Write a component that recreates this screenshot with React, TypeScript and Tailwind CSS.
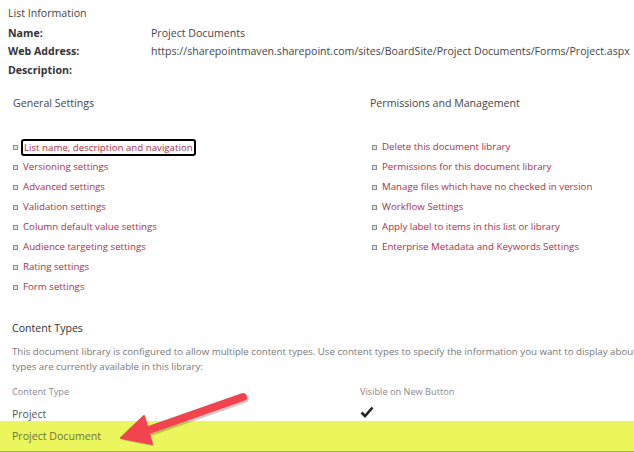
import React from "react";

const left = [
  "List name, description and navigation",
  "Versioning settings",
  "Advanced settings",
  "Validation settings",
  "Column default value settings",
  "Audience targeting settings",
  "Rating settings",
  "Form settings",
];
const right = [
  "Delete this document library",
  "Permissions for this document library",
  "Manage files which have no checked in version",
  "Workflow Settings",
  "Apply label to items in this list or library",
  "Enterprise Metadata and Keywords Settings",
];

function Bullet() {
  return <span className="inline-block w-[5px] h-[5px] border border-[#8c8c8c] bg-[#e4e4e4] shrink-0" />;
}

function LinkRow({ text, focus }: { text: string; focus?: boolean }) {
  return (
    <div className="flex items-center h-[20px]">
      <Bullet />
      {focus ? (
        <span className="ml-[3px] px-[1px] border-2 border-black rounded-[3px] leading-[13px] text-[#a7304a]">{text}</span>
      ) : (
        <span className="ml-[5px] text-[#a7304a]">{text}</span>
      )}
    </div>
  );
}

export default function App() {
  return (
    <div
      className="relative w-[634px] h-[452px] overflow-hidden bg-white text-[#444]"
      style={{ fontFamily: '"Open Sans", "Noto Sans", sans-serif' }}
    >
      <div className="pl-[8px] pt-[4px] text-[10.6px] leading-[18px]">
        <div className="text-[#444]">List Information</div>
        <div className="mt-[2px] grid grid-cols-[143px_1fr] text-[#444]">
          <div className="font-bold text-[#333] h-[18px]">Name:</div>
          <div className="h-[18px]">Project Documents</div>
          <div className="font-bold text-[#333] h-[19px]">Web Address:</div>
          <div className="h-[19px] whitespace-nowrap">
            https://sharepointmaven.sharepoint.com/sites/BoardSite/Project Documents/Forms/Project.aspx
          </div>
          <div className="font-bold text-[#333] h-[18px]">Description:</div>
          <div />
        </div>
      </div>

      <div className="flex mt-[15px]">
        <div className="w-[370px] pl-[13px]">
          <div className="text-[10.6px] leading-[18px] text-[#444]">General Settings</div>
          <div className="mt-[25px] text-[9.7px]">
            {left.map((t, i) => (
              <LinkRow key={t} text={t} focus={i === 0} />
            ))}
          </div>
        </div>
        <div className="flex-1">
          <div className="text-[10.6px] leading-[18px] text-[#444]">Permissions and Management</div>
          <div className="mt-[25px] pl-[2px] text-[9.7px]">
            {right.map((t) => (
              <LinkRow key={t} text={t} />
            ))}
          </div>
        </div>
      </div>

      <div className="mt-[22px] pl-[12px] overflow-hidden">
        <div className="text-[10.6px] leading-[18px] text-[#333]">Content Types</div>
        <div className="mt-[7px] text-[9.7px] leading-[15px] text-[#777]">
          <div className="whitespace-nowrap">
            This document library is configured to allow multiple content types. Use content types to specify the information you want to display about
          </div>
          <div>types are currently available in this library:</div>
        </div>
        <div className="mt-[11px] flex text-[9.2px] leading-[14px] text-[#888]">
          <div className="w-[348px]">Content Type</div>
          <div>Visible on New Button</div>
        </div>
      </div>
      <div className="flex items-start h-[22px] pl-[12px] pt-[8px] text-[10.5px] leading-[14px] text-[#555]">
        <div className="w-[348px]">Project</div>
        <svg width="14" height="12" viewBox="0 0 14 12" className="mt-[-1px]">
          <path d="M1.5 6.5 L5 10 L12.5 1.5" fill="none" stroke="#222" strokeWidth="2.6" />
        </svg>
      </div>
      <div className="h-[31px] bg-[#ebf55c] border-b border-[#a6a87f] flex items-center pl-[12px] pt-[2px] text-[10.6px] text-[#6e7442]">
        Project Document
      </div>

      <svg className="absolute left-0 top-0 pointer-events-none" width="634" height="452">
        <g transform="translate(1.5,2)" opacity="0.25">
          <line x1="243" y1="397" x2="146" y2="431" stroke="#333" strokeWidth="8" strokeLinecap="round" />
          <polygon points="121,438 144,416 152,444" fill="#333" />
        </g>
        <line x1="243" y1="397" x2="146" y2="431" stroke="#f2444e" strokeWidth="8" strokeLinecap="round" />
        <polygon points="121,438 144,416 152,444" fill="#f2444e" stroke="#f2444e" strokeWidth="2" strokeLinejoin="round" />
      </svg>
    </div>
  );
}
